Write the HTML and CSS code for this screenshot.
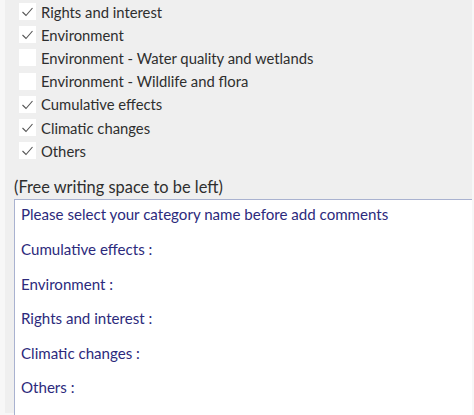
FILE: index.html
```html
<!DOCTYPE html>
<html>
<head>
<title>Categories</title>
<link rel="stylesheet" href="styles.css">
</head>
<body>
	<div class="panel">
		<ul class="checks">
			<li><span class="box on"><svg viewBox="0 0 17 17"><path d="M3.5 9 L7 12.5 L13.5 5"/></svg></span>Rights and interest</li>
			<li><span class="box on"><svg viewBox="0 0 17 17"><path d="M3.5 9 L7 12.5 L13.5 5"/></svg></span>Environment</li>
			<li><span class="box"></span>Environment - Water quality and wetlands</li>
			<li><span class="box"></span>Environment - Wildlife and flora</li>
			<li><span class="box on"><svg viewBox="0 0 17 17"><path d="M3.5 9 L7 12.5 L13.5 5"/></svg></span>Cumulative effects</li>
			<li><span class="box on"><svg viewBox="0 0 17 17"><path d="M3.5 9 L7 12.5 L13.5 5"/></svg></span>Climatic changes</li>
			<li><span class="box on"><svg viewBox="0 0 17 17"><path d="M3.5 9 L7 12.5 L13.5 5"/></svg></span>Others</li>
		</ul>
		<div class="label">(Free writing space to be left)</div>
		<textarea class="notes">Please select your category name before add comments

Cumulative effects :

Environment :

Rights and interest :

Climatic changes :

Others :</textarea>
	</div>
</body>
</html>
```

FILE: styles.css
```css
html, body {
	margin: 0;
	height: 100%;
	overflow: hidden;
	background: #f7f7f7;
	font-family: Lato, "Open Sans", sans-serif;
}

.panel {
	margin: 2px 2px 0 5px;
	height: calc(100% - 2px);
	background: #efefef;
	box-sizing: border-box;
	padding-left: 9px;
}

.checks {
	list-style: none;
	margin: -2px 0 0;
	padding: 0 0 0 5px;
}

.checks li {
	display: flex;
	align-items: center;
	height: 23.2px;
	font-size: 14.8px;
	color: #2e2e2e;
}

.box {
	width: 17px;
	height: 17px;
	background: #fff;
	margin-right: 5px;
	flex: none;
}

.box svg {
	width: 17px;
	height: 17px;
	display: block;
}

.box svg path {
	fill: none;
	stroke: #555;
	stroke-width: 1.1;
}

.label {
	margin-top: 15px;
	font-size: 16.4px;
	color: #2e2e2e;
	height: 22px;
}

.notes {
	display: block;
	width: 100%;
	height: 220px;
	box-sizing: border-box;
	margin: 0;
	border: 1px solid #a9b2d0;
	border-right: none;
	border-bottom: none;
	background: #fff;
	color: #2c2a7c;
	font-family: Lato, "Open Sans", sans-serif;
	font-size: 15.1px;
	line-height: 17.3px;
	padding: 6px 6px;
	resize: none;
	outline: none;
	overflow: hidden;
}
```
